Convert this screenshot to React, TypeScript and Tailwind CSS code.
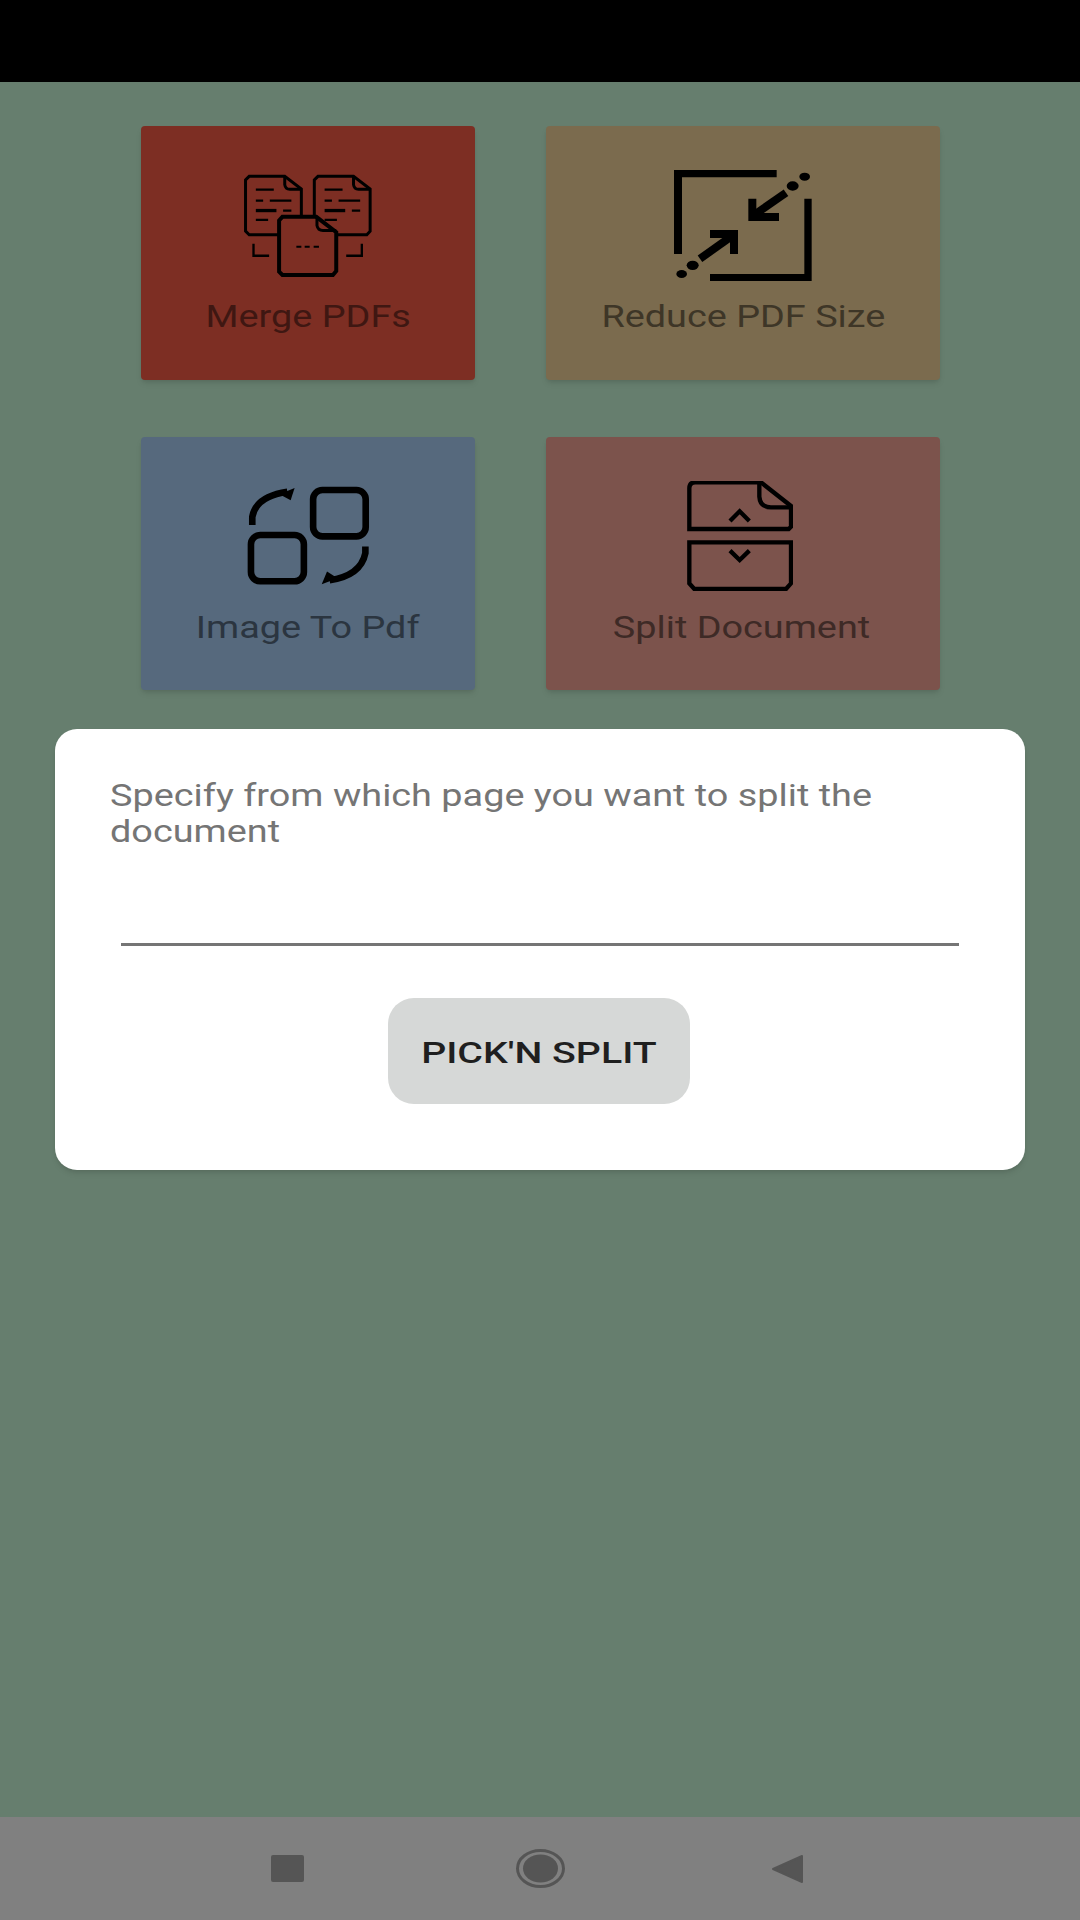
const MergeIcon = ({ bg }: { bg: string }) => (
  <svg width="130" height="103" viewBox="340 190 390 310" fill="none" stroke="#000" strokeWidth="9">
    {[0, 207].map((dx) => (
      <g key={dx} transform={`translate(${dx} 0)`}>
        <path d="M358 197H465L515 235V362L505 373H358L347 362V208Z" />
        <path d="M465 197V222Q467 236 480 236H515" />
        <path d="M378 237H432M378 270H400M420 270H485M378 328H415M460 300H485" strokeWidth="7" />
        <path d="M378 300H440" strokeWidth="10" />
      </g>
    ))}
    <path d="M458 319H560L620 365V482L610 494H458L448 484V330Z" fill={bg} strokeWidth="12" />
    <path d="M562 320V345Q565 360 580 360H620" />
    <path d="M500 409H515M525 409H540M552 409H568" strokeWidth="6" />
    <path d="M371 400V436H418M650 436H697V400" strokeWidth="7" />
  </svg>
);

const ReduceIcon = () => (
  <svg width="138" height="111" viewBox="432 180 414 333" fill="none" stroke="#000">
    <path d="M444 432V190H740" strokeWidth="24" />
    <path d="M540 503H834V266" strokeWidth="22" />
    <path d="M667 266V321H747" strokeWidth="24" />
    <path d="M672 315L768 248" strokeWidth="24" />
    <path d="M612 432V372H540" strokeWidth="24" />
    <path d="M606 378L510 446" strokeWidth="24" />
    <g fill="#000" stroke="none">
      <ellipse cx="788" cy="228" rx="18" ry="14" />
      <ellipse cx="824" cy="200" rx="16" ry="12" />
      <ellipse cx="488" cy="466" rx="18" ry="14" />
      <ellipse cx="455" cy="492" rx="16" ry="12" />
    </g>
  </svg>
);

const ImageIcon = () => (
  <svg width="125" height="100" viewBox="345 198 378 300" fill="none" stroke="#000" strokeWidth="20">
    <rect x="548" y="209" width="159" height="140" rx="28" />
    <rect x="360" y="345" width="160" height="140" rx="28" />
    <path d="M364 315V290Q375 228 470 214" />
    <path d="M706 380V400Q692 468 598 482" />
    <path d="M492 203L480 240L446 222Z" fill="#000" stroke="none" />
    <path d="M574 494L590 455L622 476Z" fill="#000" stroke="none" />
  </svg>
);

const SplitIcon = () => (
  <svg className="mr-[6px]" width="106" height="110" viewBox="473 183 318 330" fill="none" stroke="#000" strokeWidth="13">
    <path d="M498 187H695L785 258V320L778 327H480V205Q480 187 498 187Z" />
    <path d="M690 190V230Q692 262 725 262H785" />
    <path d="M602 303L631 274L660 303" />
    <path d="M480 367H785V490L770 507H495L480 490Z" />
    <path d="M602 392L631 420L660 392" />
  </svg>
);

const tools = [
  { label: 'Merge PDFs', bg: 'bg-[#7d2e23]', text: 'text-[#3f1712]', icon: <MergeIcon bg="#7d2e23" /> },
  { label: 'Reduce PDF Size', bg: 'bg-[#7b6b4e]', text: 'text-[#3e3627]', icon: <ReduceIcon /> },
  { label: 'Image To Pdf', bg: 'bg-[#56697d]', text: 'text-[#2b3540]', icon: <ImageIcon /> },
  { label: 'Split Document', bg: 'bg-[#7c534c]', text: 'text-[#3e2a26] mr-[4px]', icon: <SplitIcon /> },
];

const App = () => {
  return (
    <div className="relative flex h-[1920px] w-[1080px] flex-col overflow-hidden bg-[#667e6e] font-[Roboto,sans-serif]">
      <div className="h-[82px] bg-black" />

      <main className="flex-1 pl-[141px] pt-[44px]">
        <div className="grid grid-cols-[334px_394px] grid-rows-[254px_253px] gap-x-[71px] gap-y-[57px]">
          {tools.map((tool) => (
            <div key={tool.label} className={`flex flex-col items-center rounded-[4px] shadow-md ${tool.bg}`}>
              <div className="mt-[43px] flex h-[112px] items-center justify-center">{tool.icon}</div>
              <div className={`mt-[18px] scale-x-[1.22] whitespace-nowrap text-[31px] leading-[36px] ${tool.text}`}>
                {tool.label}
              </div>
            </div>
          ))}
        </div>
      </main>

      <div className="flex h-[103px] items-center bg-[#808080] pl-[271px]">
        <div className="h-[27px] w-[33px] rounded-[2px] bg-[#555555]" />
        <svg className="ml-[212px]" width="49" height="39" viewBox="0 0 49 39">
          <ellipse cx="24.5" cy="19.5" rx="23" ry="18" fill="none" stroke="#555555" strokeWidth="3" />
          <ellipse cx="24.5" cy="19.5" rx="17.5" ry="14" fill="#555555" />
        </svg>
        <svg className="ml-[206px]" width="33" height="30" viewBox="0 0 33 30">
          <path d="M2 15L31 2V28Z" fill="#555555" stroke="#555555" strokeWidth="2" strokeLinejoin="round" />
        </svg>
      </div>

      {/* dialog over the tool grid */}
      <div className="absolute left-[55px] top-[729px] flex h-[441px] w-[970px] flex-col rounded-[22px] bg-white pt-[49px] shadow-md">
        <p className="ml-[55px] origin-left scale-x-[1.22] whitespace-nowrap text-[31px] leading-[36px] text-[#757575]">
          Specify from which page you want to split the
          <br />
          document
        </p>
        <div className="mx-[66px] mt-[93px] h-[3px] bg-[#757575]" />
        <button className="ml-[333px] mt-[52px] flex h-[106px] w-[302px] items-center justify-center rounded-[26px] bg-[#d6d8d7] pt-[2px]">
          <span className="scale-x-[1.31] whitespace-nowrap text-[30px] font-medium text-[#1f1f1f]">PICK'N SPLIT</span>
        </button>
      </div>
    </div>
  );
};

export default App;
